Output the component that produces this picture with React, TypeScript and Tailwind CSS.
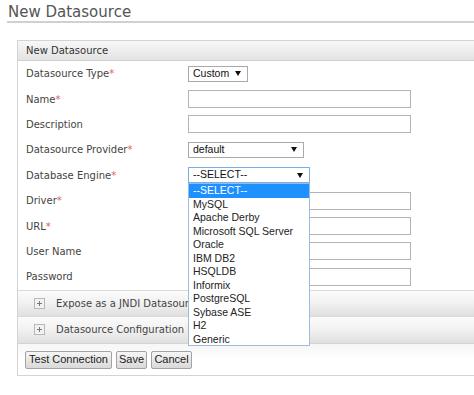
import React from "react"

const Req = () => <span className="text-[#e06060]">*</span>

const Arrow = () => (
  <svg width="6" height="5" viewBox="0 0 6 5" className="shrink-0">
    <path d="M0 0 L6 0 L3 5 Z" fill="#111" />
  </svg>
)

const Select = ({
  value,
  width,
  focused,
  children,
}: {
  value: string
  width: string
  focused?: boolean
  children?: React.ReactNode
}) => (
  <div className="relative">
    <div
      className={`${width} h-[16px] flex items-center justify-between pl-[4px] pr-[6px] bg-white border ${
        focused ? "border-[#7aaee6]" : "border-[#a9a9a9]"
      } font-['Liberation_Sans',Arial,sans-serif] text-[10.5px] text-[#111]`}
    >
      <span>{value}</span>
      <Arrow />
    </div>
    {children}
  </div>
)

const TextInput = () => (
  <div className="w-[223px] h-[18px] bg-white border border-[#b3b3b3]" />
)

const engines = [
  "--SELECT--",
  "MySQL",
  "Apache Derby",
  "Microsoft SQL Server",
  "Oracle",
  "IBM DB2",
  "HSQLDB",
  "Informix",
  "PostgreSQL",
  "Sybase ASE",
  "H2",
  "Generic",
]

const EngineList = () => (
  <div className="absolute left-0 top-full z-10 w-[122px] h-[163px] bg-white border border-[#9bbbe0] font-['Liberation_Sans',Arial,sans-serif] text-[10.5px] text-[#222]">
    {engines.map((e, i) => (
      <div
        key={e}
        className={`h-[13.5px] leading-[13.5px] pl-[4px] ${
          i === 0 ? "bg-[#1e90ff] text-white" : ""
        }`}
      >
        {e}
      </div>
    ))}
  </div>
)

const PlusBox = () => (
  <div className="w-[11px] h-[11px] border border-[#b8b8b8] bg-[#f2f2f2] flex items-center justify-center">
    <svg width="7" height="7" viewBox="0 0 7 7">
      <path d="M3.5 1 V6 M1 3.5 H6" stroke="#777" strokeWidth="1" />
    </svg>
  </div>
)

const Section = ({ title }: { title: string }) => (
  <div className="h-[26.5px] flex items-center pl-[16px] border-t border-[#d9d9d9] bg-gradient-to-b from-[#fbfbfb] via-[#f1f1f1] to-[#dfdfdf]">
    <PlusBox />
    <span className="ml-[11px] text-[10px] text-[#444]">{title}</span>
  </div>
)

const Row = ({
  label,
  required,
  children,
}: {
  label: string
  required?: boolean
  children: React.ReactNode
}) => (
  <div className="h-[25.4px] flex items-center">
    <div className="w-[170px] pl-[8px] text-[10px] text-[#444]">
      {label}
      {required && <Req />}
    </div>
    {children}
  </div>
)

const Btn = ({ label, width }: { label: string; width: string }) => (
  <button
    className={`${width} h-[18px] rounded-[2px] border border-[#a3a3a3] bg-gradient-to-b from-[#f6f6f6] to-[#d9d9d9] font-['Liberation_Sans',Arial,sans-serif] text-[11px] text-[#222] leading-none`}
  >
    {label}
  </button>
)

export default function App() {
  return (
    <div className="w-[474px] h-[395px] overflow-hidden bg-white font-['DejaVu_Sans',sans-serif]">
      <div className="ml-[7px] pl-[1px] pt-[3px] h-[23px] border-b-2 border-[#cdd1d5] text-[15px] leading-[18px] text-[#555]">
        New Datasource
      </div>

      <div className="ml-[17px] mt-[17px] w-[480px] border border-[#d4d4d4]">
        <div className="h-[20px] flex items-center pl-[8px] border-b border-[#d0d0d0] bg-gradient-to-b from-[#f8f8f8] to-[#e3e3e3] text-[10px] text-[#333]">
          New Datasource
        </div>

        <Row label="Datasource Type" required>
          <Select value="Custom" width="w-[60px]" />
        </Row>
        <Row label="Name" required>
          <TextInput />
        </Row>
        <Row label="Description">
          <TextInput />
        </Row>
        <Row label="Datasource Provider" required>
          <Select value="default" width="w-[116px]" />
        </Row>
        <Row label="Database Engine" required>
          <Select value="--SELECT--" width="w-[122px]" focused>
            <EngineList />
          </Select>
        </Row>
        <Row label="Driver" required>
          <TextInput />
        </Row>
        <Row label="URL" required>
          <TextInput />
        </Row>
        <Row label="User Name">
          <TextInput />
        </Row>
        <Row label="Password">
          <TextInput />
        </Row>

        <Section title="Expose as a JNDI Datasource" />
        <Section title="Datasource Configuration Parameters" />

        <div className="flex gap-[4px] pl-[7px] pt-[7px] pb-[6px] border-t border-[#d4d4d4] bg-gradient-to-b from-[#f6f6f6] via-white to-white">
          <Btn label="Test Connection" width="w-[87px]" />
          <Btn label="Save" width="w-[31px]" />
          <Btn label="Cancel" width="w-[41px]" />
        </div>
      </div>
    </div>
  )
}
